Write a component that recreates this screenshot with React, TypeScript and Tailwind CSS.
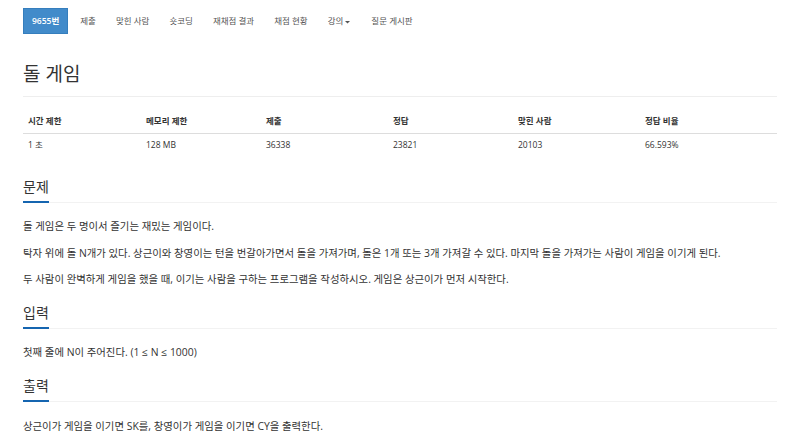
import React from "react";

const font = { fontFamily: '"Open Sans", "Noto Sans CJK KR", sans-serif' };

function Heading({ children }: { children: React.ReactNode }) {
  return (
    <div className="border-b border-[#f2f2f2] h-[26px] relative mb-[14px]">
      <h2 className="text-[14px] leading-[20px] text-[#333] font-normal">{children}</h2>
      <div className="absolute left-0 bottom-[-1px] w-[26px] h-[2px] bg-[#1565b0]" />
    </div>
  );
}

export default function App() {
  const navs = ["제출", "맞힌 사람", "숏코딩", "재채점 결과", "채점 현황"];
  const widths = ["w-[118px]", "w-[120px]", "w-[127px]", "w-[125px]", "w-[127px]", ""];
  return (
    <div className="w-[800px] h-[435px] bg-white overflow-hidden text-[#333]" style={font}>
      <div className="px-[23px]">
        <nav className="flex items-center pt-[8px] text-[8.5px] text-[#555]">
          <div className="h-[26px] px-[8px] mr-[2px] flex items-center bg-[#428bca] text-white font-semibold border border-[#357ebd]">9655번</div>
          {navs.map((n) => (
            <div key={n} className="h-[26px] px-[10px] flex items-center">{n}</div>
          ))}
          <div className="h-[26px] px-[10px] flex items-center">
            강의
            <svg width="7" height="6" viewBox="0 0 7 6" className="ml-[1px] mt-[1px]"><path d="M1 2h5L3.5 4.5z" fill="#555" /></svg>
          </div>
          <div className="h-[26px] px-[10px] flex items-center">질문 게시판</div>
        </nav>
        <div className="mt-[28px] border-b border-[#eee] pb-[10px]">
          <h1 className="text-[19px] leading-[24px] font-normal text-[#333]">돌 게임</h1>
        </div>
        <table className="w-full mt-[14px] text-[8.5px] border-collapse table-fixed">
          <thead>
            <tr className="border-b border-[#ddd]">
              {["시간 제한", "메모리 제한", "제출", "정답", "맞힌 사람", "정답 비율"].map((h, i) => (
                <th key={h} className={`text-left font-bold px-[5px] h-[22px] align-middle ${widths[i]}`}>{h}</th>
              ))}
            </tr>
          </thead>
          <tbody>
            <tr>
              {["1 초", "128 MB", "36338", "23821", "20103", "66.593%"].map((d) => (
                <td key={d} className="px-[5px] h-[24px] align-middle">{d}</td>
              ))}
            </tr>
          </tbody>
        </table>
        <div className="mt-[20px]">
          <Heading>문제</Heading>
          <div className="text-[10.4px] leading-[16px] text-[#333] flex flex-col gap-[10.5px] pt-[1px]">
            <p>돌 게임은 두 명이서 즐기는 재밌는 게임이다.</p>
            <p>탁자 위에 돌 N개가 있다. 상근이와 창영이는 턴을 번갈아가면서 돌을 가져가며, 돌은 1개 또는 3개 가져갈 수 있다. 마지막 돌을 가져가는 사람이 게임을 이기게 된다.</p>
            <p>두 사람이 완벽하게 게임을 했을 때, 이기는 사람을 구하는 프로그램을 작성하시오. 게임은 상근이가 먼저 시작한다.</p>
          </div>
        </div>
        <div className="mt-[16px]">
          <Heading>입력</Heading>
          <p className="text-[10.4px] leading-[16px] pt-[1px]">첫째 줄에 N이 주어진다. (1 ≤ N ≤ 1000)</p>
        </div>
        <div className="mt-[16px]">
          <Heading>출력</Heading>
          <p className="text-[10.4px] leading-[16px] pt-[2px]">상근이가 게임을 이기면 SK를, 창영이가 게임을 이기면 CY을 출력한다.</p>
        </div>
      </div>
    </div>
  );
}
